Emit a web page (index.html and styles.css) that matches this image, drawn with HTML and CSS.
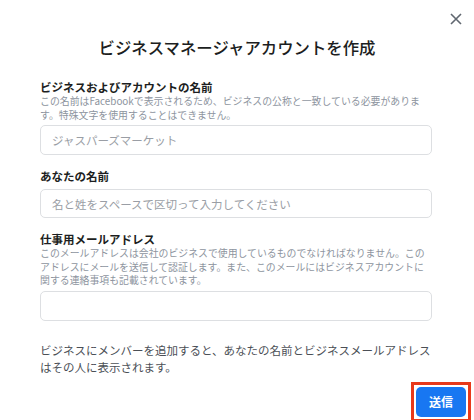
FILE: index.html
```html
<!DOCTYPE html>
<html lang="ja">
<head>
<meta charset="utf-8">
<link rel="stylesheet" href="styles.css">
</head>
<body>
<div class="dialog">
  <div class="topbar">
    <svg class="close" width="12" height="12" viewBox="0 0 12 12"><path d="M1 1L11 11M11 1L1 11" stroke="#606770" stroke-width="1.6" fill="none"/></svg>
  </div>
  <h1 class="title">ビジネスマネージャアカウントを作成</h1>
  <div class="content">
    <div class="field first">
      <div class="label">ビジネスおよびアカウントの名前</div>
      <div class="help">この名前はFacebookで表示されるため、ビジネスの公称と一致している必要があります。特殊文字を使用することはできません。</div>
      <div class="input"><span class="ph">ジャスパーズマーケット</span></div>
    </div>
    <div class="field">
      <div class="label">あなたの名前</div>
      <div class="input nohelp"><span class="ph">名と姓をスペースで区切って入力してください</span></div>
    </div>
    <div class="field">
      <div class="label">仕事用メールアドレス</div>
      <div class="help">このメールアドレスは会社のビジネスで使用しているものでなければなりません。このアドレスにメールを送信して認証します。また、このメールにはビジネスアカウントに関する連絡事項も記載されています。</div>
      <div class="input"></div>
    </div>
    <p class="note">ビジネスにメンバーを追加すると、あなたの名前とビジネスメールアドレスはその人に表示されます。</p>
  </div>
  <div class="actions">
    <div class="highlight"><button class="submit">送信</button></div>
  </div>
</div>
</body>
</html>
```
FILE: styles.css
```css
html, body {
  margin: 0;
  padding: 0;
  background: #ffffff;
}
body {
  width: 474px;
  height: 420px;
  overflow: hidden;
  font-family: "Noto Sans CJK JP", "Noto Sans", sans-serif;
  color: #1c1e21;
}
.dialog {
  display: flex;
  flex-direction: column;
}
.topbar {
  height: 35px;
  display: flex;
  justify-content: flex-end;
  align-items: flex-start;
  padding-right: 12px;
}
.close {
  margin-top: 13px;
}
.title {
  margin: 0;
  height: 24px;
  font-size: 16.4px;
  line-height: 24px;
  font-weight: 500;
  text-align: center;
  color: #1c1e21;
}
.content {
  padding: 0 42px 0 40px;
  margin-top: 20px;
}
.field {
  margin-bottom: 13px;
}
.label {
  font-size: 11.5px;
  line-height: 16px;
  font-weight: 700;
  color: #1c1e21;
}
.help {
  font-size: 9.9px;
  line-height: 13.6px;
  color: #8d949e;
}
.input {
  margin-top: 3px;
  height: 28px;
  border: 1px solid #dddfe2;
  border-radius: 5px;
  display: flex;
  align-items: center;
  padding-left: 11px;
}
.input.nohelp {
  margin-top: 5px;
  height: 27px;
}
.ph {
  font-size: 11.5px;
  color: #9a9ea5;
}
.note {
  margin: 21px 0 0 0;
  font-size: 11.5px;
  line-height: 17px;
  color: #4b4f56;
}
.actions {
  display: flex;
  justify-content: flex-end;
  padding-right: 3px;
  margin-top: 6px;
}
.highlight {
  border: 3px solid #e8391a;
  padding: 2px;
}
.submit {
  display: block;
  width: 50px;
  height: 30px;
  border: none;
  border-radius: 5px;
  background: #1877f2;
  color: #ffffff;
  font-family: "Noto Sans CJK JP", sans-serif;
  font-weight: 700;
  font-size: 12px;
  padding: 0;
}
```
